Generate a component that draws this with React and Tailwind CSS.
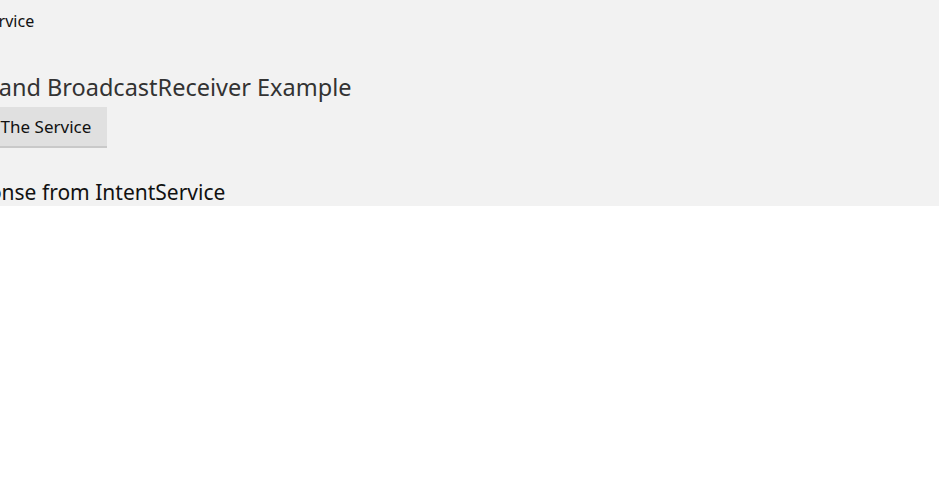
import React from "react";

export default function App() {
  return (
    <div className="min-h-screen w-full bg-white overflow-hidden" style={{ fontFamily: '"Noto Sans", "Open Sans", sans-serif' }}>
      <div className="h-[206px] w-full overflow-hidden bg-[#f2f2f2]">
        <div className="flex w-max flex-col items-start">
          <div className="-ml-[65px] mt-[9px] h-[24px] text-[16px] leading-[24px] text-[#111]">IntentService</div>
          <h1 className="-ml-[153px] mt-[38px] text-[23.5px] leading-[32px] text-[#333]">
            IntentService and BroadcastReceiver Example
          </h1>
          <button className="-ml-[58px] mt-[4px] h-[41px] border-b-2 border-[#c9c9c9] bg-[#e0e0e0] px-[16px] text-[17px] text-[#111]">
            Start The Service
          </button>
          <div className="-ml-[59px] mt-[29px] text-[21px] leading-[30px] text-[#111]">Response from IntentService</div>
        </div>
      </div>
    </div>
  );
}
